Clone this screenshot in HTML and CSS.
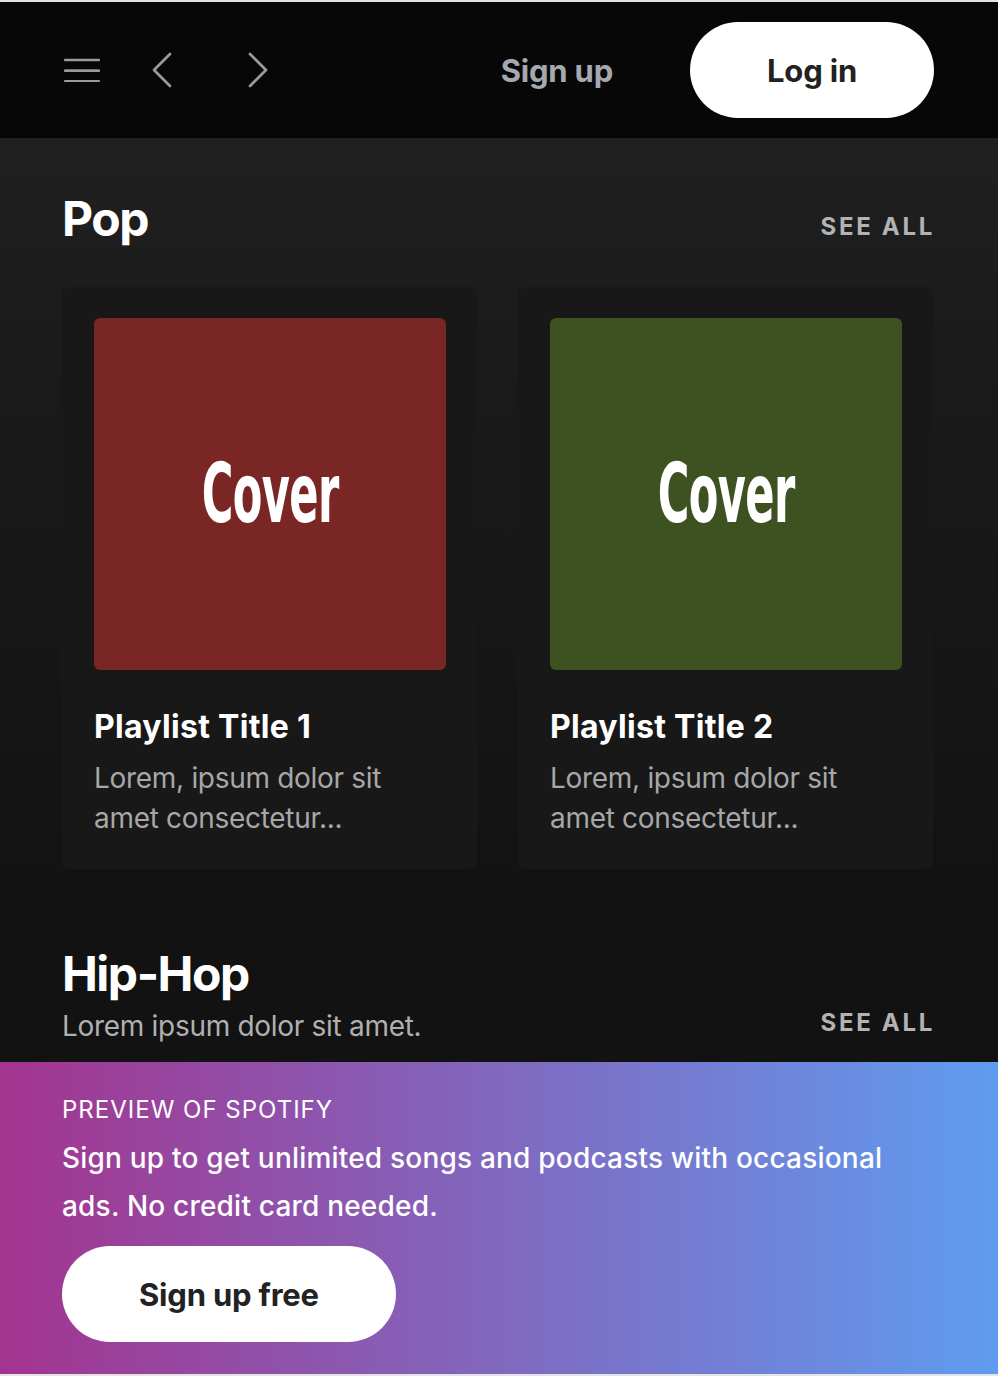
FILE: index.html
```html
<!DOCTYPE html>
<html lang="en">
<head>
<meta charset="utf-8">
<title>Spotify Preview</title>
<link rel="stylesheet" href="styles.css">
</head>
<body>
<div class="frame">
  <header class="topbar">
    <div class="nav-icons">
      <svg class="icon-menu" width="36" height="24" viewBox="0 0 36 24" aria-hidden="true">
        <path d="M1.3 2h33.4M1.3 12.7h33.4M1.3 23.3h33.4" stroke="#9b9b9b" stroke-width="2.7" stroke-linecap="round" fill="none"/>
      </svg>
      <svg class="icon-back" width="20" height="36" viewBox="0 0 20 36" aria-hidden="true">
        <path d="M18 2 L2 18 L18 34" stroke="#9b9b9b" stroke-width="2.7" stroke-linecap="round" stroke-linejoin="round" fill="none"/>
      </svg>
      <svg class="icon-fwd" width="20" height="36" viewBox="0 0 20 36" aria-hidden="true">
        <path d="M2 2 L18 18 L2 34" stroke="#9b9b9b" stroke-width="2.7" stroke-linecap="round" stroke-linejoin="round" fill="none"/>
      </svg>
    </div>
    <div class="auth">
      <button class="btn-ghost">Sign up</button>
      <button class="btn-pill">Log in</button>
    </div>
  </header>

  <main class="content">
    <section class="shelf">
      <div class="shelf-head">
        <div class="shelf-titles">
          <h2 class="shelf-title">Pop</h2>
        </div>
        <a class="see-all" href="#">See all</a>
      </div>
      <div class="cards">
        <article class="card">
          <div class="cover cover-red"><span class="cover-text">Cover</span></div>
          <h3 class="card-title">Playlist Title 1</h3>
          <p class="card-desc">Lorem, ipsum dolor sit amet consectetur...</p>
        </article>
        <article class="card">
          <div class="cover cover-green"><span class="cover-text">Cover</span></div>
          <h3 class="card-title">Playlist Title 2</h3>
          <p class="card-desc">Lorem, ipsum dolor sit amet consectetur...</p>
        </article>
      </div>
    </section>

    <section class="shelf shelf-next">
      <div class="shelf-head">
        <div class="shelf-titles">
          <h2 class="shelf-title">Hip-Hop</h2>
          <p class="shelf-sub">Lorem ipsum dolor sit amet.</p>
        </div>
        <a class="see-all see-all-low" href="#">See all</a>
      </div>
    </section>
  </main>

  <footer class="banner">
    <p class="banner-kicker">Preview of Spotify</p>
    <p class="banner-text">Sign up to get unlimited songs and podcasts with occasional ads. No credit card needed.</p>
    <button class="btn-pill btn-free">Sign up free</button>
  </footer>
</div>
</body>
</html>
```

FILE: styles.css
```css
* {
  box-sizing: border-box;
}

html, body {
  margin: 0;
  padding: 0;
  background: #e4e4e4;
}

body {
  font-family: Inter, "Noto Sans", "Liberation Sans", sans-serif;
  color: #fff;
}

.frame {
  width: 998px;
  border-top: 2px solid #e4e4e4;
  border-bottom: 2px solid #e4e4e4;
}

/* Header */
.topbar {
  height: 136px;
  background: #070707;
  display: flex;
  align-items: center;
  justify-content: space-between;
  padding: 0 64px;
}

.nav-icons {
  display: flex;
  align-items: center;
}

.icon-menu {
  display: block;
}

.icon-back {
  display: block;
  margin-left: 52px;
}

.icon-fwd {
  display: block;
  margin-left: 76px;
}

.auth {
  display: flex;
  align-items: center;
}

button {
  font-family: inherit;
  border: 0;
  cursor: pointer;
}

.btn-ghost {
  background: transparent;
  color: #a5a8af;
  font-size: 31px;
  font-weight: 700;
  height: 96px;
  padding: 0 77px;
  letter-spacing: -0.2px;
}

.btn-pill {
  background: #fff;
  color: #222;
  font-size: 31px;
  font-weight: 700;
  height: 96px;
  padding: 0 77px;
  border-radius: 48px;
  letter-spacing: -0.2px;
}

/* Main */
.content {
  background: linear-gradient(180deg, #202020 0px, #1b1b1b 200px, #121212 780px, #121212 100%);
  padding: 52px 65px 15px 62px;
}

.shelf-head {
  display: flex;
  justify-content: space-between;
  align-items: flex-end;
}

.shelf-title {
  margin: 0;
  font-size: 48px;
  line-height: 58px;
  font-weight: 700;
  letter-spacing: -1.5px;
}

.shelf-sub {
  margin: 2px 0 0;
  font-size: 28px;
  line-height: 42px;
  color: #b0b0b0;
  letter-spacing: -0.3px;
}

.see-all {
  color: #b3b3b3;
  text-decoration: none;
  text-transform: uppercase;
  font-size: 24px;
  font-weight: 700;
  letter-spacing: 2.7px;
  margin-bottom: 7px;
  margin-right: -2px;
}

.see-all-low {
  margin-bottom: 10px;
}

.cards {
  margin-top: 39px;
  display: grid;
  grid-template-columns: 1fr 1fr;
  gap: 41px;
}

.card {
  background: #181818;
  border-radius: 8px;
  padding: 31px 31px 31px 32px;
}

.cover {
  height: 352px;
  border-radius: 6px;
  display: flex;
  align-items: center;
  justify-content: center;
  overflow: hidden;
}

.cover-red {
  background: #7a2624;
}

.cover-green {
  background: #3d5220;
}

.cover-text {
  font-family: "DejaVu Sans Condensed", "DejaVu Sans", sans-serif;
  font-weight: 700;
  font-size: 82px;
  line-height: 1;
  color: #fff;
  transform: scaleX(0.585);
  letter-spacing: -1px;
}

.card-title {
  margin: 37px 0 0;
  font-size: 32px;
  line-height: 39px;
  font-weight: 700;
  letter-spacing: 0.3px;
}

.card-desc {
  margin: 12px 0 0;
  font-size: 28px;
  line-height: 40px;
  color: #a7a7a7;
  letter-spacing: -0.3px;
}

.shelf-next {
  margin-top: 76px;
}

/* Banner */
.banner {
  background: linear-gradient(90deg, #a3348f 0%, #5f9cef 100%);
  padding: 30px 64px 32px 62px;
}

.banner-kicker {
  margin: 0;
  font-size: 24px;
  line-height: 36px;
  text-transform: uppercase;
  letter-spacing: 1px;
}

.banner-text {
  margin: 6px 0 0;
  font-size: 28px;
  line-height: 48px;
  font-weight: 500;
  letter-spacing: 0.2px;
}

.btn-free {
  margin-top: 16px;
  display: block;
}
```
